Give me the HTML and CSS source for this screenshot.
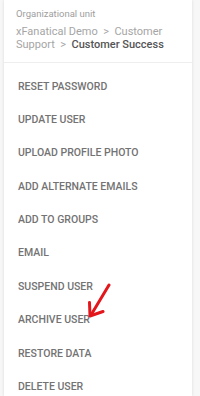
FILE: index.html
```html
<!DOCTYPE html>
<html>
<head>
  <meta charset="UTF-8">
  <title>User actions</title>
  <link rel="stylesheet" href="styles.css">
</head>
<body>
  <div class="card">
    <div class="org">
      <div class="org-label">Organizational unit</div>
      <div class="org-path">xFanatical Demo &nbsp;&gt;&nbsp; Customer Support &nbsp;&gt;&nbsp; <b>Customer Success</b></div>
    </div>
    <ul class="actions">
      <li>Reset password</li>
      <li>Update user</li>
      <li>Upload profile photo</li>
      <li>Add alternate emails</li>
      <li>Add to groups</li>
      <li>Email</li>
      <li>Suspend user</li>
      <li>Archive user
        <svg class="arrow" width="26" height="36" viewBox="0 0 26 36">
          <path d="M21 2 L3 32" stroke="#e3161b" stroke-width="3" stroke-linecap="round" fill="none"/>
          <path d="M1.5 19.5 L2 33 L15 28.5" stroke="#e3161b" stroke-width="3" stroke-linecap="round" stroke-linejoin="round" fill="none"/>
        </svg>
      </li>
      <li>Restore data</li>
      <li>Delete user</li>
    </ul>
  </div>
</body>
</html>
```

FILE: styles.css
```css
body {
  margin: 0;
  background: #f7f7f7;
  font-family: Roboto, "Liberation Sans", sans-serif;
}

.card {
  margin: 0 8px 0 4px;
  background: #fff;
  box-shadow: 0 0 3px rgba(0, 0, 0, 0.12);
  height: 396px;
  overflow: hidden;
}

.org {
  padding: 8px 10px 10px 12px;
  border-bottom: 1px solid #eee;
  height: 44px;
}

.org-label {
  font-size: 9.5px;
  color: #9e9e9e;
  line-height: 11px;
}

.org-path {
  margin-top: 7px;
  font-size: 11px;
  line-height: 12.5px;
  color: #a5a5a5;
}

.org-path b {
  color: #555;
  font-weight: 500;
}

.actions {
  list-style: none;
  margin: 0;
  padding: 6.5px 0 0;
}

.actions li {
  position: relative;
  height: 33.4px;
  line-height: 33.4px;
  padding-left: 14px;
  font-size: 10.5px;
  font-weight: 500;
  text-transform: uppercase;
  color: #737373;
}

.arrow {
  position: absolute;
  left: 84px;
  top: -20px;
}
```
